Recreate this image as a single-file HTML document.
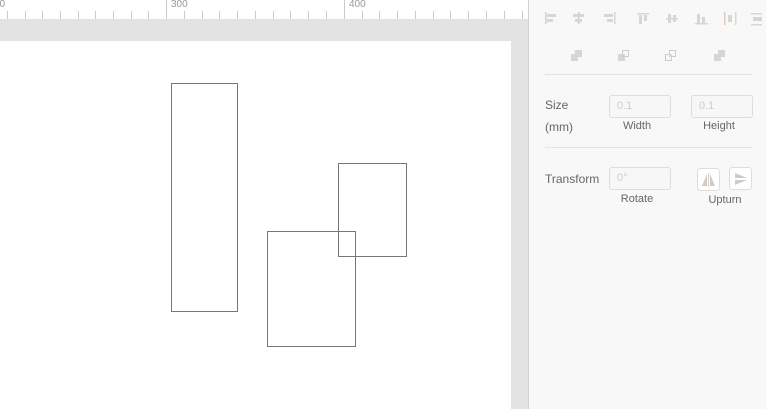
<!DOCTYPE html>
<html><head><meta charset="utf-8"><style>
*{margin:0;padding:0;box-sizing:border-box}
body{width:766px;height:409px;overflow:hidden;background:#fff;font-family:"Liberation Sans",sans-serif;position:relative}
.abs{position:absolute}
.lbl{font-size:12px;color:#666}
.inp{position:absolute;width:62px;height:23px;border:1px solid #ddd;border-radius:3px;background:#f7f7f7;color:#ccc;font-size:11px;padding:4px 7px}
.cap{position:absolute;font-size:11px;color:#666;text-align:center;width:62px}
</style></head><body>
<div class="abs" style="left:0;top:0;width:528px;height:19px;background:#fff"></div>
<svg class="abs" style="left:0;top:0" width="528" height="41">
<rect x="0" y="19" width="528" height="22" fill="#e3e3e3"/>
<g stroke="#ccc" stroke-width="1">
<line x1="7.5" y1="11" x2="7.5" y2="19"/><line x1="25.5" y1="11" x2="25.5" y2="19"/><line x1="42.5" y1="11" x2="42.5" y2="19"/><line x1="60.5" y1="11" x2="60.5" y2="19"/><line x1="78.5" y1="11" x2="78.5" y2="19"/><line x1="95.5" y1="11" x2="95.5" y2="19"/><line x1="113.5" y1="11" x2="113.5" y2="19"/><line x1="131.5" y1="11" x2="131.5" y2="19"/><line x1="148.5" y1="11" x2="148.5" y2="19"/><line x1="166.5" y1="0" x2="166.5" y2="19"/><line x1="184.5" y1="11" x2="184.5" y2="19"/><line x1="202.5" y1="11" x2="202.5" y2="19"/><line x1="219.5" y1="11" x2="219.5" y2="19"/><line x1="237.5" y1="11" x2="237.5" y2="19"/><line x1="255.5" y1="11" x2="255.5" y2="19"/><line x1="273.5" y1="11" x2="273.5" y2="19"/><line x1="290.5" y1="11" x2="290.5" y2="19"/><line x1="308.5" y1="11" x2="308.5" y2="19"/><line x1="326.5" y1="11" x2="326.5" y2="19"/><line x1="344.5" y1="0" x2="344.5" y2="19"/><line x1="362.5" y1="11" x2="362.5" y2="19"/><line x1="379.5" y1="11" x2="379.5" y2="19"/><line x1="397.5" y1="11" x2="397.5" y2="19"/><line x1="415.5" y1="11" x2="415.5" y2="19"/><line x1="433.5" y1="11" x2="433.5" y2="19"/><line x1="450.5" y1="11" x2="450.5" y2="19"/><line x1="468.5" y1="11" x2="468.5" y2="19"/><line x1="486.5" y1="11" x2="486.5" y2="19"/><line x1="504.5" y1="11" x2="504.5" y2="19"/><line x1="522.5" y1="11" x2="522.5" y2="19"/>
</g>
<g font-size="10" fill="#999" font-family="Liberation Sans"><text x="-6" y="7">00</text><text x="171" y="7">300</text><text x="349" y="7">400</text></g>
</svg>
<div class="abs" style="left:511px;top:41px;width:17px;height:368px;background:#e3e3e3"></div>
<svg class="abs" style="left:0;top:0" width="511" height="409" fill="none" stroke="#777" stroke-width="1">
<rect x="171.5" y="83.5" width="66" height="228"/>
<rect x="338.5" y="163.5" width="68" height="93"/>
<rect x="267.5" y="231.5" width="88" height="115"/>
</svg>
<div class="abs" style="left:528px;top:0;width:238px;height:409px;background:#f8f8f8;border-left:1px solid #d0d0d0"></div>
<svg class="abs" style="left:540px;top:8px" width="222" height="60">
<g fill="#d6d6d6">
<rect x="5" y="4" width="1.5" height="12" fill="#e6c9bd"/><rect x="7" y="6" width="9" height="3"/><rect x="7" y="11" width="6" height="3"/>
<rect x="38" y="4" width="1.5" height="12" fill="#ccc"/><rect x="33" y="6" width="11" height="3"/><rect x="35" y="11" width="7" height="3"/>
<rect x="74" y="4" width="1.5" height="12"/><rect x="64" y="6" width="9" height="3"/><rect x="67" y="11" width="6" height="3"/>
<rect x="97" y="5" width="12" height="1.5"/><rect x="99" y="7" width="3" height="9"/><rect x="104" y="7" width="3" height="6"/>
<rect x="126" y="10" width="12" height="1.5"/><rect x="128" y="6" width="3" height="9"/><rect x="133" y="7" width="3" height="7"/>
<rect x="155" y="15" width="13" height="1.5"/><rect x="157" y="6" width="3" height="9"/><rect x="162" y="9" width="3" height="6"/>
<rect x="184" y="4" width="1.5" height="13" fill="#e6c9bd"/><rect x="195" y="4" width="1.5" height="13"/><rect x="188" y="7" width="4" height="7"/>
<rect x="211" y="5" width="13" height="1.5"/><rect x="211" y="16" width="13" height="1.5"/><rect x="213" y="9" width="9" height="4"/>
<g transform="translate(0,6)">
<rect x="31" y="40" width="7" height="7"/><rect x="35" y="36" width="7" height="7"/>
<rect x="78" y="40" width="7" height="7"/><rect x="82.5" y="36.5" width="6" height="6" fill="none" stroke="#ccc"/>
<rect x="125.5" y="40.5" width="6" height="6" fill="none" stroke="#ccc"/><rect x="129.5" y="36.5" width="6" height="6" fill="none" stroke="#ccc"/><rect x="129" y="40" width="3" height="3"/>
<rect x="174" y="40" width="7" height="7"/><rect x="178" y="36" width="7" height="7"/>
</g>
</g></svg>
<div class="abs" style="left:545px;top:74px;width:207px;height:1px;background:#e3e3e3"></div>
<div class="abs lbl" style="left:545px;top:98px">Size</div>
<div class="abs lbl" style="left:545px;top:120px">(mm)</div>
<div class="inp" style="left:609px;top:95px">0.1</div>
<div class="inp" style="left:691px;top:95px">0.1</div>
<div class="cap" style="left:606px;top:120px">Width</div>
<div class="cap" style="left:688px;top:120px">Height</div>
<div class="abs" style="left:545px;top:147px;width:207px;height:1px;background:#e3e3e3"></div>
<div class="abs lbl" style="left:545px;top:172px">Transform</div>
<div class="inp" style="left:609px;top:167px">0°</div>
<div class="cap" style="left:606px;top:193px">Rotate</div>
<svg class="abs" style="left:696px;top:167px" width="58" height="26">
<rect x="1.5" y="1.5" width="22" height="22" rx="3" fill="#fff" stroke="#ddd"/>
<path d="M11 7 L11 19 L6 19Z" fill="#ccc"/><path d="M14 7 L14 19 L19 19Z" fill="#ccc"/><line x1="12.5" y1="6" x2="12.5" y2="20" stroke="#e6c9bd"/>
<rect x="33.5" y="0.5" width="22" height="22" rx="3" fill="#fff" stroke="#ddd"/>
<path d="M39 6 L51 11 L39 11Z" fill="#ccc"/><path d="M39 13 L51 13 L39 18Z" fill="#ccc"/>
</svg>
<div class="cap" style="left:694px;top:194px">Upturn</div>
</body></html>
